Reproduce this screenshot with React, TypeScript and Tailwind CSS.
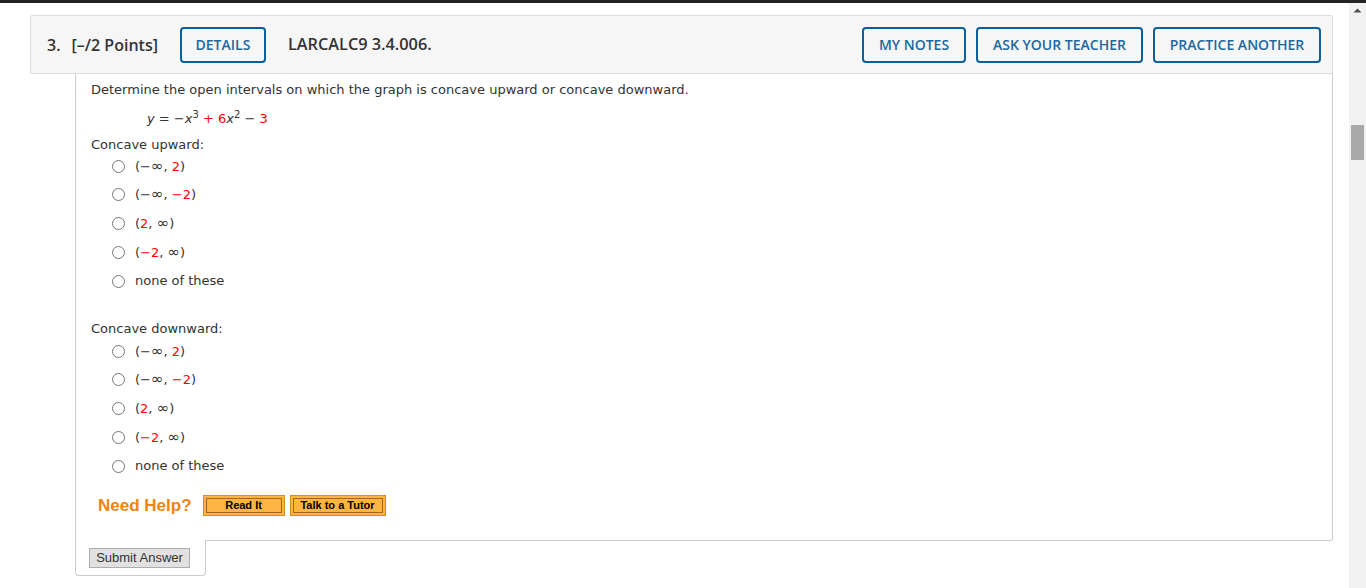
import React from 'react'

const sans = { fontFamily: '"DejaVu Sans", Verdana, sans-serif' }

function Red({ children }: { children: React.ReactNode }) {
  return <span className="text-[#ff0000]">{children}</span>
}

function Inf() {
  return <span className="text-[15px] leading-[16px]">∞</span>
}

function Radio() {
  return <span className="inline-block w-[13px] h-[13px] rounded-full border border-[#767676] bg-white shrink-0" />
}

function Option({ children }: { children: React.ReactNode }) {
  return (
    <div className="flex items-center h-[16px] ml-[21px] gap-[10px]">
      <Radio />
      <span className="text-[#333] text-[13px] leading-[16px]">{children}</span>
    </div>
  )
}

function OptionList() {
  return (
    <div className="flex flex-col gap-[12.75px]">
      <Option>(−<Inf />, <Red>2</Red>)</Option>
      <Option>(−<Inf />, <Red>−2</Red>)</Option>
      <Option>(<Red>2</Red>, <Inf />)</Option>
      <Option>(<Red>−2</Red>, <Inf />)</Option>
      <Option>none of these</Option>
    </div>
  )
}

function OutlineButton({ label, width }: { label: string; width: string }) {
  return (
    <div
      className={`${width} h-[36px] flex items-center justify-center border-2 border-[#0d5f9b] rounded-[4px] text-[#1a69a2] text-[14px] font-semibold`}
    >
      {label}
    </div>
  )
}

function HelpButton({ label, width }: { label: string; width: string }) {
  return (
    <div className={`${width} h-[21px] p-[2px] border border-[#dd8a1e] bg-[#fcb443]`}>
      <div
        className="h-full border border-[#a9661a] flex items-center justify-center text-[11px] font-bold text-black"
        style={{ fontFamily: '"Liberation Sans", Arial, sans-serif' }}
      >
        {label}
      </div>
    </div>
  )
}

export default function App() {
  return (
    <div className="w-[1366px] h-[588px] bg-white overflow-hidden flex flex-col">
      <div className="h-[3px] bg-[#222] shrink-0" />
      <div className="flex flex-1 min-h-0">
        <div className="flex-1 pl-[30px] pr-[16px] pt-[12px]">
          <div
            className="h-[59px] border border-[#dddddd] bg-[#f6f6f6] rounded-[2px] flex items-center pl-[16px] pr-[11px] text-[#333]"
            style={{ fontFamily: '"Open Sans", sans-serif' }}
          >
            <span className="text-[16px] font-semibold">3.</span>
            <span className="text-[16px] font-semibold ml-[11px]">[–/2 Points]</span>
            <div className="ml-[22px]">
              <OutlineButton label="DETAILS" width="w-[86px]" />
            </div>
            <span className="text-[16.3px] font-semibold ml-[22px]">LARCALC9 3.4.006.</span>
            <div className="ml-auto flex gap-[10px]">
              <OutlineButton label="MY NOTES" width="w-[104px]" />
              <OutlineButton label="ASK YOUR TEACHER" width="w-[167px]" />
              <OutlineButton label="PRACTICE ANOTHER" width="w-[168px]" />
            </div>
          </div>

          <div className="ml-[45px]" style={sans}>
            <div className="-mt-px border-l border-r border-b border-[#cccccc] rounded-br-[3px] pl-[15px] pt-[9px] pb-[24px] text-[13px] text-[#333]">
              <div className="h-[16px] leading-[16px]">
                Determine the open intervals on which the graph is concave upward or concave downward.
              </div>
              <div className="h-[16px] leading-[16px] mt-[13px] ml-[56px]">
                <i>y</i> = −<i>x</i>
                <sup className="text-[10px]">3</sup> <Red>+ 6</Red>
                <i>x</i>
                <sup className="text-[10px]">2</sup> − <Red>3</Red>
              </div>
              <div className="h-[16px] leading-[16px] mt-[10px]">Concave upward:</div>
              <div className="mt-[5px]">
                <OptionList />
              </div>
              <div className="h-[16px] leading-[16px] mt-[32px]">Concave downward:</div>
              <div className="mt-[6px]">
                <OptionList />
              </div>
              <div className="mt-[21px] ml-[7px] flex items-center h-[21px]">
                <span
                  className="text-[17px] font-bold text-[#f0840c] mr-[11px]"
                  style={{ fontFamily: '"Liberation Sans", Arial, sans-serif' }}
                >
                  Need Help?
                </span>
                <HelpButton label="Read It" width="w-[82px]" />
                <div className="ml-[5px]">
                  <HelpButton label="Talk to a Tutor" width="w-[96px]" />
                </div>
              </div>
            </div>
            <div className="-mt-px w-[131px] bg-white border-l border-r border-b border-[#cccccc] rounded-b-[4px] pl-[13px] pt-[8px] pb-[7px]">
              <div
                className="w-[101px] h-[20px] bg-[#e1e1e1] border border-[#adadad] flex items-center justify-center text-[13px] text-[#333]"
                style={{ fontFamily: '"Liberation Sans", Arial, sans-serif' }}
              >
                Submit Answer
              </div>
            </div>
          </div>
        </div>

        <div className="w-[17px] bg-[#f1f1f1] shrink-0 flex flex-col items-center">
          <svg width="9" height="5" viewBox="0 0 9 5" className="mt-[5px]">
            <path d="M0.5 4.5 L4.5 0.5 L8.5 4.5 Z" fill="#505050" />
          </svg>
          <div className="w-[13px] h-[35px] bg-[#a8a8a8] mt-[112px]" />
        </div>
      </div>
    </div>
  )
}
